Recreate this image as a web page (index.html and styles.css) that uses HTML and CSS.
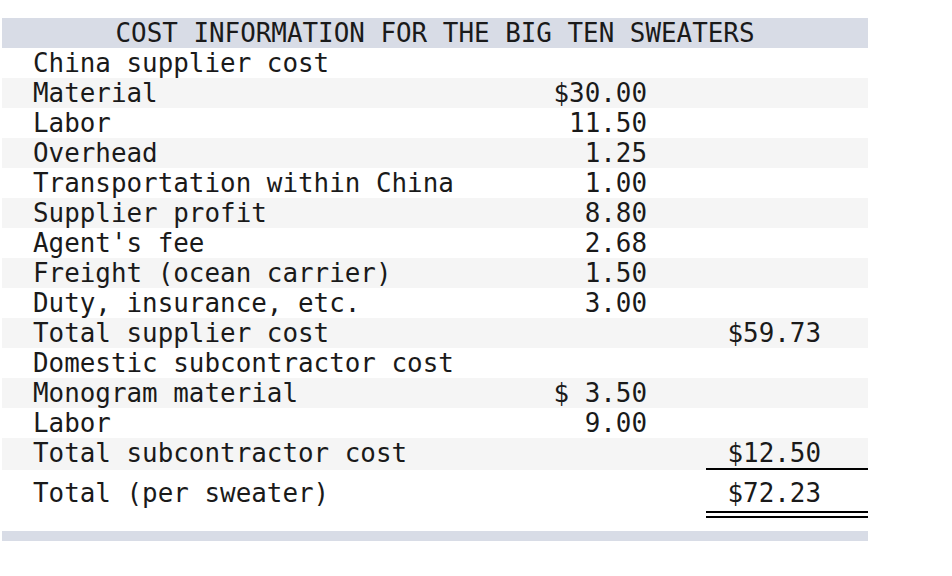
FILE: index.html
```html
<!DOCTYPE html>
<html>
<head>
<meta charset="utf-8">
<link rel="stylesheet" href="styles.css">
</head>
<body>
<div class="sheet">
  <div class="title">COST INFORMATION FOR THE BIG TEN SWEATERS</div>
  <div class="rows">
    <div class="row"><span class="label">China supplier cost</span><span class="amt"></span><span class="tot"></span></div>
    <div class="row"><span class="label">Material</span><span class="amt">$30.00</span><span class="tot"></span></div>
    <div class="row"><span class="label">Labor</span><span class="amt">11.50</span><span class="tot"></span></div>
    <div class="row"><span class="label">Overhead</span><span class="amt">1.25</span><span class="tot"></span></div>
    <div class="row"><span class="label">Transportation within China</span><span class="amt">1.00</span><span class="tot"></span></div>
    <div class="row"><span class="label">Supplier profit</span><span class="amt">8.80</span><span class="tot"></span></div>
    <div class="row"><span class="label">Agent's fee</span><span class="amt">2.68</span><span class="tot"></span></div>
    <div class="row"><span class="label">Freight (ocean carrier)</span><span class="amt">1.50</span><span class="tot"></span></div>
    <div class="row"><span class="label">Duty, insurance, etc.</span><span class="amt">3.00</span><span class="tot"></span></div>
    <div class="row"><span class="label">Total supplier cost</span><span class="amt"></span><span class="tot">$59.73</span></div>
    <div class="row"><span class="label">Domestic subcontractor cost</span><span class="amt"></span><span class="tot"></span></div>
    <div class="row"><span class="label">Monogram material</span><span class="amt">$ 3.50</span><span class="tot"></span></div>
    <div class="row"><span class="label">Labor</span><span class="amt">9.00</span><span class="tot"></span></div>
    <div class="row row-sub"><span class="label">Total subcontractor cost</span><span class="amt"></span><span class="tot">$12.50</span></div>
    <div class="row row-grand"><span class="label">Total (per sweater)</span><span class="amt"></span><span class="tot">$72.23</span></div>
  </div>
  <div class="footer-bar"></div>
</div>
</body>
</html>
```

FILE: styles.css
```css
html, body {
  margin: 0;
  padding: 0;
  background: #ffffff;
}

body {
  font-family: "DejaVu Sans Mono", "Liberation Mono", monospace;
  font-size: 25.9px;
  color: #1a1a1a;
}

.sheet {
  width: 866px;
  margin: 18px 0 0 2px;
  display: flex;
  flex-direction: column;
}

.title {
  background: #d8dce6;
  height: 30px;
  line-height: 30px;
  text-align: center;
  white-space: pre;
}

.rows {
  display: flex;
  flex-direction: column;
}

.row {
  display: grid;
  grid-template-columns: 494px 210px 162px;
  line-height: 30px;
  height: 30px;
  white-space: pre;
}

.row:nth-child(even) {
  background: #f5f5f5;
}

.label {
  padding-left: 31px;
}

.amt {
  text-align: right;
  padding-right: 59px;
}

.tot {
  text-align: right;
  padding-right: 47px;
}

.row-sub {
  height: 32px;
}

.row-sub .tot {
  border-bottom: 2px solid #000;
}

.row-grand {
  height: auto;
  padding-top: 8px;
}

.row-grand .label,
.row-grand .amt {
  padding-bottom: 10px;
}

.row-grand .tot {
  padding-bottom: 3px;
  border-bottom: 7px double #000;
}

.footer-bar {
  margin-top: 13px;
  height: 10px;
  background: #d8dce6;
}
```
